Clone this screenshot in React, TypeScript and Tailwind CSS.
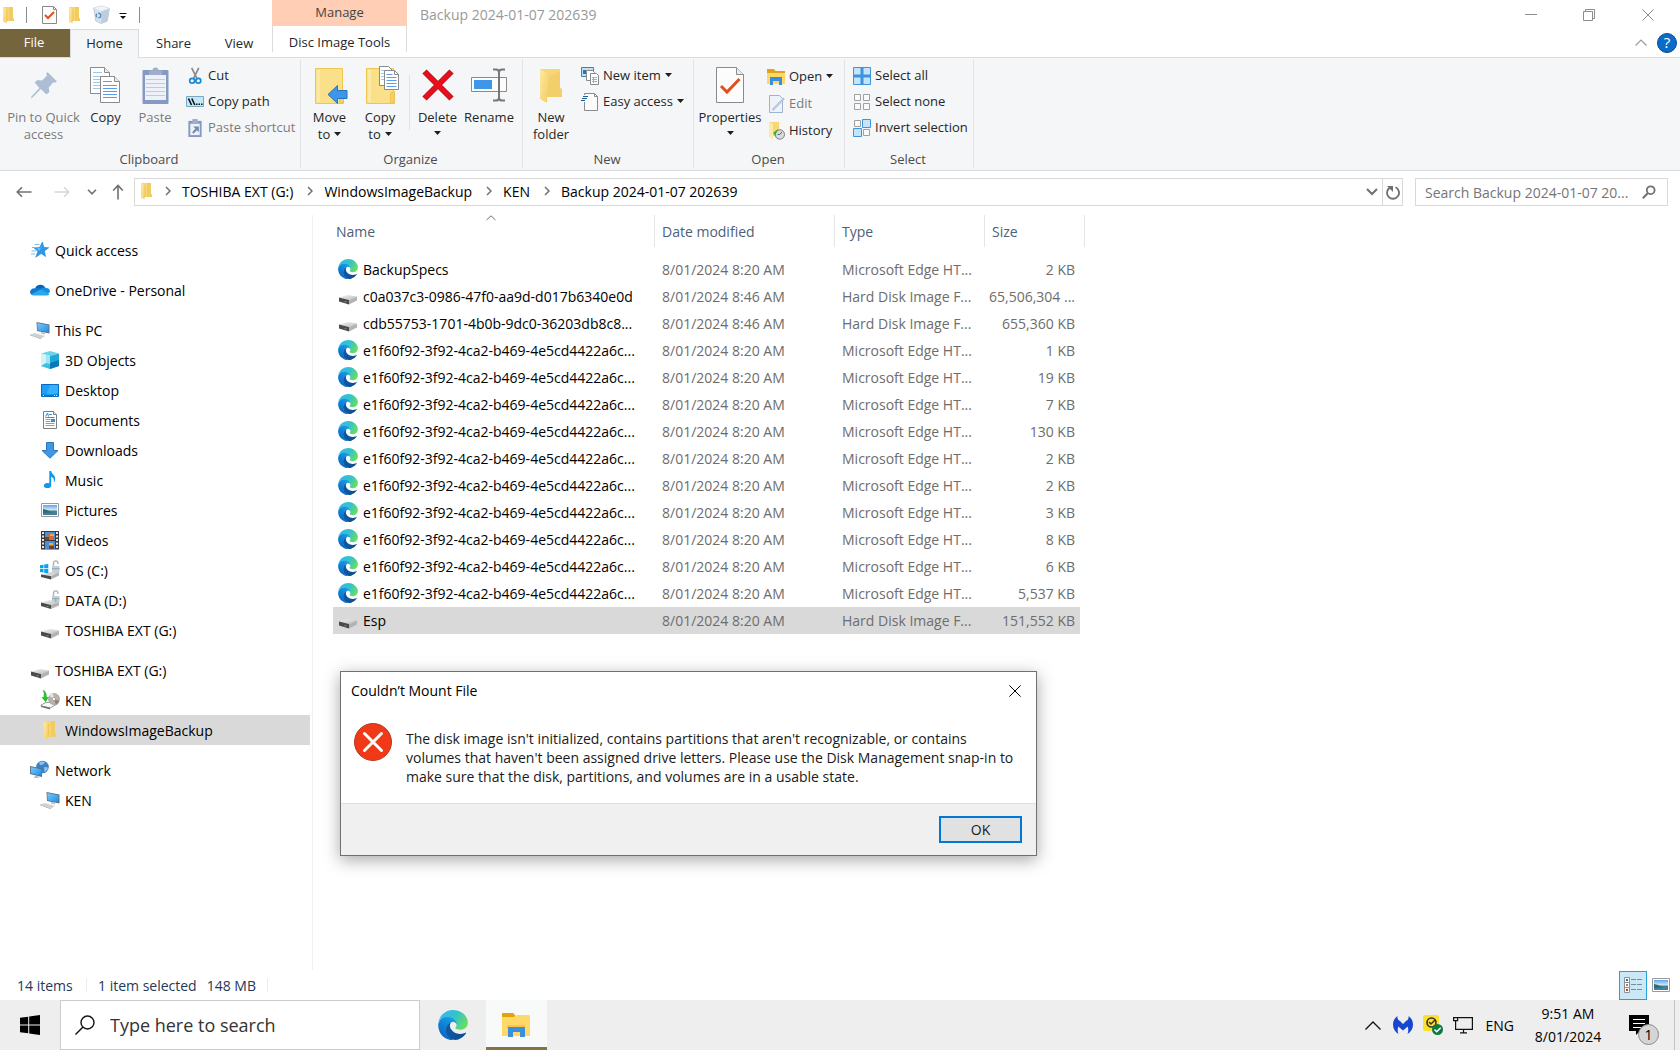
import React from "react";

type IconProps = { className?: string };

/* ---------- shared gradients ---------- */

function Gradients() {
  return (
    <svg width="0" height="0" className="absolute" aria-hidden="true">
      <defs>
        <linearGradient id="edgeA" x1="0.1" y1="0.5" x2="1" y2="0.5">
          <stop offset="0" stopColor="#0c59a4" />
          <stop offset="1" stopColor="#114a8b" />
        </linearGradient>
        <linearGradient id="edgeB" x1="0.8" y1="0.1" x2="0.3" y2="1">
          <stop offset="0" stopColor="#1b9de2" />
          <stop offset="0.5" stopColor="#0f80d7" />
          <stop offset="1" stopColor="#0b62bd" />
        </linearGradient>
        <linearGradient id="edgeC" x1="0" y1="0.3" x2="1" y2="0.7">
          <stop offset="0" stopColor="#35b8f1" />
          <stop offset="0.5" stopColor="#33c3c9" />
          <stop offset="1" stopColor="#6ce05a" />
        </linearGradient>
        <linearGradient id="folderA" x1="0" y1="0" x2="1" y2="1">
          <stop offset="0" stopColor="#fde9a6" />
          <stop offset="1" stopColor="#f6cf66" />
        </linearGradient>
        <linearGradient id="driveA" x1="0" y1="0" x2="1" y2="1">
          <stop offset="0" stopColor="#f2f2f2" />
          <stop offset="1" stopColor="#bdbdbd" />
        </linearGradient>
        <linearGradient id="screenA" x1="0" y1="0" x2="1" y2="1">
          <stop offset="0" stopColor="#7cc8f7" />
          <stop offset="1" stopColor="#1d8fe6" />
        </linearGradient>
        <linearGradient id="skyA" x1="0" y1="0" x2="0" y2="1">
          <stop offset="0" stopColor="#5aa5ee" />
          <stop offset="0.5" stopColor="#d6eafa" />
          <stop offset="0.6" stopColor="#4c7f86" />
          <stop offset="1" stopColor="#3f7fae" />
        </linearGradient>
      </defs>
    </svg>
  );
}

/* ---------- icons ---------- */

const Edge = ({ className }: IconProps) => (
  <svg viewBox="0 0 256 259" className={className}>
    <path fill="url(#edgeA)" d="M235.68 195.46a93.73 93.73 0 0 1-10.54 4.71 101.87 101.87 0 0 1-35.9 6.46c-47.32 0-88.54-32.55-88.54-74.32A31.48 31.48 0 0 1 117.13 105c-42.8 1.8-53.8 46.4-53.8 72.53 0 73.88 68.09 81.37 82.76 81.37 7.91 0 19.84-2.3 27-4.56l1.31-.44a128.34 128.34 0 0 0 66.6-52.8 4 4 0 0 0-5.32-5.64z" />
    <path fill="url(#edgeB)" d="M105.73 246.42A79.2 79.2 0 0 1 83 225.08a80.72 80.72 0 0 1 29.49-120c3.12-1.47 8.45-4.13 15.54-4a32.35 32.35 0 0 1 25.69 13 31.88 31.88 0 0 1 6.36 18.66c0-.21 24.46-79.6-80-79.6-43.9 0-80 41.66-80 78.21a130.15 130.15 0 0 0 12.11 56 128 128 0 0 0 156.38 67.11 75.55 75.55 0 0 1-62.78-8z" />
    <path fill="url(#edgeC)" d="M152.33 148.86c-.81 1-3.3 2.5-3.3 5.66 0 2.61 1.7 5.12 4.72 7.23 14.38 10 41.49 8.68 41.56 8.68a59.56 59.56 0 0 0 30.27-8.35 61.38 61.38 0 0 0 30.43-52.88c.26-22.41-8-37.31-11.34-43.91C223.46 23.84 177.72 0 128 0A128 128 0 0 0 0 126.2c.48-36.54 36.8-66.05 80-66.05 3.5 0 23.46.34 42 10.07 16.34 8.58 24.9 18.94 30.85 29.21 6.18 10.67 7.28 24.15 7.28 29.52s-2.74 13.33-7.8 19.91z" />
  </svg>
);

const Folder = ({ className }: IconProps) => (
  <svg viewBox="0 0 13 18" className={className}>
    <path fill="#f8d675" d="M1 1h10v11l1 1v2H1z" />
    <path fill="#f3cb63" d="M7 1h4v11l1 1v2H7z" />
    <path fill="url(#folderA)" d="M1 1l3.5 2v14.5L1 15.5z" />
    <path fill="#f0c358" d="M4.500 3v13l1-.8V3.600z" />
  </svg>
);

const Drive = ({ className }: IconProps) => (
  <svg viewBox="0 0 20 20" className={className}>
    <path fill="url(#driveA)" d="M1 11.500L10 9l9 1.500-8 3.500z" />
    <path fill="#4a4a4a" d="M1 11.500l10 2.500v4.500L1 15.500z" />
    <path fill="#b3b3b3" d="M11 14l8-3.500v4l-8 4z" />
    <path fill="#5ab35a" d="M6.500 15.300h2v1h-2z" />
  </svg>
);

const LockedDrive = ({ className }: IconProps) => (
  <svg viewBox="0 0 20 20" className={className}>
    <path fill="url(#driveA)" d="M1 12.500L10 10l9 1.500-8 3.500z" />
    <path fill="#4a4a4a" d="M1 12.500l10 2.500v4L1 16z" />
    <path fill="#b3b3b3" d="M11 15l8-3.500v4L11 19z" />
    <path fill="#5ab35a" d="M6.500 16h2v1h-2z" />
    <path fill="none" stroke="#b5b5b5" strokeWidth="1.500" d="M13.500 6V3.200a2.200 2.200 0 0 1 4.400 0V4" />
    <path fill="#c9ced2" d="M12 6h7.500v6l-3.700 1.500L12 12z" />
    <path fill="#8fb0c9" d="M12 8h7.500v1.200H12z" />
    <path fill="#9aa0a5" d="M15.300 9h1v3h-1z" />
  </svg>
);

const OsDrive = ({ className }: IconProps) => (
  <svg viewBox="0 0 20 20" className={className}>
    <path fill="url(#driveA)" d="M1 14.500L10 12l9-.5-8 4z" />
    <path fill="#4a4a4a" d="M1 14.500l10 1.500v3.500L1 17z" />
    <path fill="#b3b3b3" d="M11 16l8-4.500v4l-8 4z" />
    <path fill="none" stroke="#b5b5b5" strokeWidth="1.500" d="M13.500 6V3.200a2.200 2.200 0 0 1 4.400 0V4" />
    <path fill="#c9ced2" d="M12 6h7.500v6l-3.700 1.500L12 12z" />
    <path fill="#8fb0c9" d="M12 8h7.500v1.200H12z" />
    <path fill="#00a4ef" d="M0 5.200l3.500-.5v3.600H0zM4.200 4.600L8.300 4v4.300H4.200zM0 9h3.500v3.600L0 12.100zM4.200 9h4.100v4.200l-4.100-.5z" />
  </svg>
);

const BackupDisc = ({ className }: IconProps) => (
  <svg viewBox="0 0 20 20" className={className}>
    <path fill="#fafafa" stroke="#9b9b9b" d="M1 15l5-2.500 12-.5v1.500l-8 4.500-9-2z" />
    <path fill="#777" d="M1 15.500l9 2v2l-9-2.500z" />
    <circle cx="14" cy="9" r="5.500" fill="#b9b3ab" stroke="#8d8d8d" strokeWidth="0.600" />
    <path fill="#e8e4de" d="M14 9L9.500 6A5.500 5.500 0 0 1 13 3.600z" />
    <path fill="#8f7f76" d="M14 9l5.200 2a5.500 5.500 0 0 1-3.500 3.200z" />
    <circle cx="14" cy="9" r="1.600" fill="#fff" stroke="#888" strokeWidth="0.600" />
    <path fill="#2fbe2f" d="M2.500 0c3 .5 4.200 3 4.200 7l2 .2-3 5-4.200-5 2-.1C4 4.500 4 2 2.500 0z" />
  </svg>
);

const Computer = ({ className }: IconProps) => (
  <svg viewBox="0 0 20 20" className={className}>
    <path fill="#5d7286" d="M6.500 2l13 2.500v9L7 11z" />
    <path fill="url(#screenA)" d="M7.300 3l11.200 2.200v7L7.700 10.200z" />
    <path fill="#b8bcc0" d="M11 12l4 .8v1.700l-4-1z" />
    <path fill="#cfd2d5" d="M0 14.500l5-1.500 10 3-4 2.500z" />
    <path fill="#a7abaf" d="M0 14.500l11 4v.7L0 15.200z" />
  </svg>
);

const Network = ({ className }: IconProps) => (
  <svg viewBox="0 0 20 20" className={className}>
    <circle cx="12.500" cy="7" r="6.300" fill="#3d83c4" />
    <path fill="#8fc2e8" d="M9 2.500c2-1.300 5-1.300 6 0l-2 2-3 .5zM14 7l4 .5c-.5 2.500-2 4-3.500 4.500z" />
    <path fill="#4d6f8d" d="M0 6l12 2.500V17L0 14z" />
    <path fill="url(#screenA)" d="M.8 7l10.500 2.200v6.600L.8 13.200z" />
    <path fill="#b9bec3" d="M5 15.500l3 .7 1.500 1.800H4z" />
  </svg>
);

const QuickStar = ({ className }: IconProps) => (
  <svg viewBox="0 0 20 20" className={className}>
    <path fill="#2c98e8" stroke="#1278c9" strokeWidth="0.500" d="M12.500 2l1.300 5.300 5 .4-4.300 3.200 1 5.600-4.300-2.900-5.500 3.600 2.200-5.800L4 7.800l5.500-.4z" />
    <path fill="#6cc0f7" d="M12.300 4l-2 4-3.800.4 3 2.500z" />
    <path stroke="#7bbdec" strokeWidth="1" d="M4.500 4.500h5M2 7.500h4M1.500 11H6M1 14h4" />
  </svg>
);

const OneDrive = ({ className }: IconProps) => (
  <svg viewBox="0 0 20 20" className={className}>
    <path fill="#0364b8" d="M5 9a5.500 5.500 0 0 1 10.300-1.200L11 12z" />
    <path fill="#0f78d4" d="M0 12.500a4 4 0 0 1 5-4c1.500-1 4-.8 5 .3l5 6.200H3.500A3.400 3.400 0 0 1 0 12.500z" />
    <path fill="#1490df" d="M10 9.500c1.500-2 4-2.300 6-1.500a4 4 0 0 1 4 4l-4 3z" />
    <path fill="#28a8ea" d="M1 14.500l9.500-5L19.500 14a3 3 0 0 1-2.800 1.500h-13A4 4 0 0 1 1 14.500z" />
  </svg>
);

const Objects3D = ({ className }: IconProps) => (
  <svg viewBox="0 0 20 20" className={className}>
    <path fill="#6fd3e8" d="M1 3.500L10 1l9 2.500L10 6z" />
    <path fill="#a6e3f0" d="M1 3.500L10 6v13l-9-3z" />
    <path fill="#1fa9d8" d="M19 3.500L10 6v13l9-3z" />
    <path fill="#0a7ab5" d="M10 19v-6l9-3v6z" />
    <path fill="#d3f3f9" d="M1 3.500L6 5v12.600L1 16z" />
    <path fill="#3cc0dc" d="M1 16l5-3 4 1v5z" />
  </svg>
);

const Desktop = ({ className }: IconProps) => (
  <svg viewBox="0 0 20 20" className={className}>
    <path fill="#1aa0f5" stroke="#0a6cc0" d="M1.500 4.500h17v12h-17z" />
    <path fill="#38b1fb" d="M10 5h8v8l-12 3z" />
    <path fill="#0a78cf" d="M2 14.500h16V16H2z" />
    <path stroke="#fff" strokeDasharray="1 1" d="M3 15.500h1M14 15.500h4" />
  </svg>
);

const Documents = ({ className }: IconProps) => (
  <svg viewBox="0 0 20 20" className={className}>
    <path fill="#fff" stroke="#7d7d7d" d="M3.500 1.500h10l3 3v14h-13z" />
    <path fill="#eee" stroke="#7d7d7d" d="M13.500 1.500v3h3" />
    <path stroke="#2b8fdc" d="M9 4.500h3M5.500 7.500h9" />
    <path fill="none" stroke="#2b8fdc" d="M5.500 6.500l2-3.500 1 3.500" />
    <path stroke="#9a9a9a" d="M5.500 9.500h5M5.500 11.500h5M5.500 13.500h9M5.500 15.500h9" />
    <path fill="#2b8fdc" d="M11 9h4v3h-4z" />
  </svg>
);

const Downloads = ({ className }: IconProps) => (
  <svg viewBox="0 0 20 20" className={className}>
    <path fill="#3f97e8" stroke="#2f74bb" d="M6.500 2.500h7v8H18L10 18.200 2 10.500h4.500z" />
  </svg>
);

const Music = ({ className }: IconProps) => (
  <svg viewBox="0 0 20 20" className={className}>
    <ellipse cx="7.500" cy="15.500" rx="3.600" ry="2.600" fill="#1196f0" />
    <path fill="#1196f0" d="M9.300 1h1.900c.3 3 4.300 4 4 8-.1 1.700-.8 2.800-1.500 3.500.8-2.900-.3-5-2.500-5.700v9H9.300z" />
  </svg>
);

const Pictures = ({ className }: IconProps) => (
  <svg viewBox="0 0 20 20" className={className}>
    <path fill="#fff" stroke="#9b9b9b" d="M1.500 3.500h17v13h-17z" />
    <path fill="url(#skyA)" d="M3 5h14v10H3z" />
    <path fill="#356a6c" d="M3 9l4 1 5 2.500-9 .5z" />
  </svg>
);

const Videos = ({ className }: IconProps) => (
  <svg viewBox="0 0 20 20" className={className}>
    <path fill="#3a3a3a" d="M1 1h18v18.500H1z" />
    <path fill="#4b8fd6" d="M5 2h10v8H5zM5 11h10v8H5z" />
    <path fill="#e2642c" d="M8 4h4l2 5H9z" />
    <path fill="#e9b33a" d="M10 4h4v2h-4zM9 13h4v2H9z" />
    <path fill="#7c3c28" d="M5 7h4v3H5zM9 16h5v3H9z" />
    <path stroke="#e6e6e6" strokeWidth="2" strokeDasharray="2 1.500" d="M3 2v17M17 2v17" />
  </svg>
);

const CheckDoc = ({ className }: IconProps) => (
  <svg viewBox="0 0 28 36" className={className}>
    <path fill="#fcfcfc" stroke="#8a8a8a" d="M.5.5h20l7 7v28H.5z" />
    <path fill="#ececec" stroke="#8a8a8a" d="M20.500.5v7h7" />
    <path fill="none" stroke="#e2501a" strokeWidth="3" d="M5 19l6 6L23.500 12" />
  </svg>
);

const CheckDocSmall = ({ className }: IconProps) => (
  <svg viewBox="0 0 15 18" className={className}>
    <path fill="#fcfcfc" stroke="#8a8a8a" d="M.5.5h11l3 3v14H.5z" />
    <path fill="none" stroke="#8a8a8a" d="M11.500.5v3h3" />
    <path fill="none" stroke="#e2501a" strokeWidth="2" d="M3 9l3 3 6-6" />
  </svg>
);

const RecycleBin = ({ className }: IconProps) => (
  <svg viewBox="0 0 17 19" className={className}>
    <path fill="#d7e3ee" stroke="#a9bccd" strokeWidth="0.700" d="M.8 3l8-2 7.500 2.500-2 12.500-6 2.500-5.500-2.500z" />
    <path fill="#bccddd" d="M8.500 6l7.800-2.500-2 12.500-6 2.500z" />
    <path fill="#eef4f9" d="M.8 3l8-2 7.500 2.500L8.500 6z" />
    <circle cx="5.500" cy="10.500" r="2.300" fill="none" stroke="#5d8ec0" strokeWidth="1.400" strokeDasharray="3.500 1.200" />
  </svg>
);

const Pin = ({ className }: IconProps) => (
  <svg viewBox="0 0 28 28" className={className}>
    <path fill="#acbdd4" d="M17.500 1L27 10.500l-2.300 1.300-1.400-.5-4.600 5.200.7 4.500-3 2.500-5.600-5.600L2.500 26.500l-1.700.7.600-1.800L9.500 17 4.600 11.500 7.500 9l4.600.4 4.900-4.800-.8-1.800z" />
  </svg>
);

const page = (x: number, y: number, faded: boolean) => (
  <g transform={`translate(${x} ${y})`}>
    <path fill="#fff" stroke="#8a8a8a" d="M.5.5h14l5 5v21H.5z" />
    <path fill="#eee" stroke="#8a8a8a" d="M14.500.5v5h5" />
    <path stroke={faded ? "#9cc9e8" : "#5a9bec"} d="M3 5.500h9M3 9.500h14M3 12.500h14M3 15.500h14M3 18.500h14M3 21.500h14" />
  </g>
);

const CopyPages = ({ className }: IconProps) => (
  <svg viewBox="0 0 31 36" className={className}>
    {page(0, 0, true)}
    {page(10, 9, false)}
  </svg>
);

const Paste = ({ className }: IconProps) => (
  <svg viewBox="0 0 27 37" className={className}>
    <path fill="#8599c2" d="M1.500 3h24a1 1 0 0 1 1 1v32a1 1 0 0 1-1 1h-24a1 1 0 0 1-1-1V4a1 1 0 0 1 1-1z" />
    <path fill="#eef2f8" d="M3 8h21v25H3z" />
    <path fill="#9eaecb" d="M7 3.500h3.500a3 3 0 0 1 6 0H20V8H7z" />
    <path stroke="#bccbe0" d="M4 12.500h19M4 16.500h19M4 20.500h19M4 24.500h19M4 28.500h19" />
  </svg>
);

const Cut = ({ className }: IconProps) => (
  <svg viewBox="0 0 18 19" className={className}>
    <path fill="none" stroke="#8a8a8a" strokeWidth="1.800" d="M5.500 1l5.500 11M13 1L7.500 12" />
    <circle cx="6" cy="14.500" r="2.600" fill="none" stroke="#1d87d2" strokeWidth="1.800" />
    <circle cx="12.500" cy="14.500" r="2.600" fill="none" stroke="#1d87d2" strokeWidth="1.800" />
  </svg>
);

const CopyPath = ({ className }: IconProps) => (
  <svg viewBox="0 0 18 18" className={className}>
    <path fill="#c5e6f8" stroke="#79a8c4" d="M.5 3.500h17v10H.5z" />
    <path stroke="#111" strokeWidth="1.600" d="M2.500 5.500l3 6.500M5.800 5.500l3 6.500" />
    <path fill="#111" d="M10 10.500h1.500V12H10zM12.500 10.500h1.500V12h-1.500zM15 10.500h1.500V12H15z" />
  </svg>
);

const PasteShortcut = ({ className }: IconProps) => (
  <svg viewBox="0 0 18 19" className={className}>
    <path fill="#8599c2" d="M2 2h14v17H2z" />
    <path fill="#eef2f8" d="M4 5h10v12H4z" />
    <path fill="#9eaecb" d="M6 2a3 3 0 0 1 6 0v2.500H6z" />
    <path fill="#6f87b4" d="M7 8h6v6l-2-2-3.500 3.500L6 14l3.500-4z" />
  </svg>
);

const BigFolderBack = () => (
  <g>
    <path fill="#fbe08a" stroke="#eec64e" d="M.5 2.500h27v23h1v12H.5z" />
    <path fill="#fde9a6" d="M2 4h3v32H2z" />
    <path fill="#f5d061" stroke="#e9bf47" strokeWidth="0.700" d="M24.500 37v-9a2 2 0 0 1 4 0v9z" />
  </g>
);

const MoveTo = ({ className }: IconProps) => (
  <svg viewBox="0 0 33 39" className={className}>
    <BigFolderBack />
    <path fill="#3d96e8" stroke="#2773bd" d="M13 28.500L22.500 19.500v5H32v8h-9.500v5z" />
  </svg>
);

const CopyTo = ({ className }: IconProps) => (
  <svg viewBox="0 0 33 39" className={className}>
    <BigFolderBack />
    <path fill="#fff" stroke="#8a8a8a" d="M13.500.5h9l4 4v15h-13z" />
    <path stroke="#9cc9e8" d="M15 4.500h6M15 7.500h6M15 10.500h6M15 13.500h6" />
    <path fill="#fff" stroke="#8a8a8a" d="M18.500 4.500h10l4 4v15h-14z" />
    <path fill="none" stroke="#8a8a8a" d="M28.500 4.500v4h4" />
    <path stroke="#5a9bec" d="M20.500 8.500h6M20.500 11.500h10M20.500 14.500h10M20.500 17.500h10M20.500 20.500h10" />
  </svg>
);

const DeleteX = ({ className }: IconProps) => (
  <svg viewBox="0 0 32 32" className={className}>
    <path stroke="#b5101c" strokeWidth="6" d="M2.500 2.500l27 27M29.500 2.500l-27 27" />
    <path stroke="#e80f1b" strokeWidth="4.500" d="M3 3l26 26M29 3L3 29" />
  </svg>
);

const Rename = ({ className }: IconProps) => (
  <svg viewBox="0 0 36 34" className={className}>
    <path fill="#fbfbfb" stroke="#8a8a8a" d="M.5 9.500h35v14H.5z" />
    <path fill="#3d96e8" d="M3 12h18v9H3z" />
    <path fill="none" stroke="#777" strokeWidth="2" d="M22 1.500h3a3 3 0 0 1 3 2.500 3 3 0 0 1 3-2.500h3M28 4v26M22 32.500h3a3 3 0 0 0 3-2.500 3 3 0 0 0 3 2.500h3" />
  </svg>
);

const NewFolder = ({ className }: IconProps) => (
  <svg viewBox="0 0 25 36" className={className}>
    <path fill="#f6d678" d="M1 2h20v19l2 1v8H1z" />
    <path fill="#efc860" d="M10 10l11-6v17l2 1v8H8z" opacity="0.500" />
    <path fill="url(#folderA)" d="M1 2l7 4v30l-7-4z" />
  </svg>
);

const NewItem = ({ className }: IconProps) => (
  <svg viewBox="0 0 18 18" className={className}>
    <path fill="#bfe0f5" stroke="#3f83b5" d="M.5.5h12v9H.5z" />
    <path fill="#2f74aa" d="M2 3h3v4H2z" />
    <path fill="#fff" stroke="#8a8a8a" d="M5.500 3.500h6l2 2v8h-8z" />
    <path fill="#fff" stroke="#8a8a8a" d="M9.500 6.500h6l2 2v9h-8z" />
    <path stroke="#8fb5dc" d="M11 10.500h5M11 12.500h5M11 14.500h5" />
    <path stroke="#e39a7b" d="M12.500 10v6" />
  </svg>
);

const EasyAccess = ({ className }: IconProps) => (
  <svg viewBox="0 0 18 18" className={className}>
    <path fill="#fcfcfc" stroke="#8a8a8a" d="M3.500.5h10l3 3v14h-13z" />
    <path fill="none" stroke="#8a8a8a" d="M13.500.5v3h3" />
    <path fill="#f4f5f7" d="M0 2h5v7H0z" />
    <path stroke="#1f5f94" strokeWidth="1.200" d="M2 3.500h5M1 5.500h5M0 7.500h4" />
  </svg>
);

const OpenFolder = ({ className }: IconProps) => (
  <svg viewBox="0 0 18 18" className={className}>
    <path fill="#e3a21a" d="M0 1h7l1.500 2H18v3H0z" />
    <path fill="#ffd966" d="M0 5h18v11H0z" />
    <path fill="#3d8fdd" d="M3 9h12v8h-3v-4H6v4H3z" />
  </svg>
);

const Edit = ({ className }: IconProps) => (
  <svg viewBox="0 0 18 18" className={className}>
    <path fill="#eef3fa" stroke="#9fb2d0" d="M2.500.5h10l3 3v14h-13z" />
    <path stroke="#9fb2d0" strokeWidth="2" d="M5.500 15L17 3.500" />
    <path stroke="#dfe8f3" strokeWidth="0.800" d="M6 14.500L16.500 4" />
  </svg>
);

const History = ({ className }: IconProps) => (
  <svg viewBox="0 0 18 18" className={className}>
    <path fill="#f8d675" d="M2 0h10v14H2z" />
    <path fill="#fde9a6" d="M2 0l4 2v15l-4-2z" />
    <circle cx="12.800" cy="12.500" r="4.700" fill="#d9dcde" stroke="#7c7c7c" />
    <path fill="none" stroke="#555" strokeWidth="0.900" d="M12.800 12.500l2-2.500M12.800 12.500h-2.200" />
    <path fill="#31b331" d="M11 7l-1 3.200c-1.500.6-1.500 3 0 5L6 11z" />
  </svg>
);

const SelectAll = ({ className }: IconProps) => (
  <svg viewBox="0 0 18 18" className={className}>
    <path fill="#c7e3f8" stroke="#3b94dd" d="M.5.5h7.500v7.500H.5zM10 .5h7.500v7.500H10zM.5 10h7.500v7.500H.5zM10 10h7.500v7.500H10z" />
    <path stroke="#3b94dd" strokeWidth="2" d="M9 0v18M0 9h18" />
  </svg>
);

const SelectNone = ({ className }: IconProps) => (
  <svg viewBox="0 0 18 18" className={className}>
    <path fill="#fafafa" stroke="#a0a0a0" d="M1.500 1.500h6v6h-6zM10.500 1.500h6v6h-6zM1.500 10.500h6v6h-6zM10.500 10.500h6v6h-6z" />
  </svg>
);

const InvertSelection = ({ className }: IconProps) => (
  <svg viewBox="0 0 18 18" className={className}>
    <path fill="#fafafa" stroke="#a0a0a0" d="M1.500 1.500h6v6h-6zM10.500 10.500h6v6h-6z" />
    <path fill="#c7e3f8" stroke="#3b94dd" d="M9.500.5h8v8h-8zM.5 9.500h8v8h-8z" />
  </svg>
);

const Caret = ({ className }: IconProps) => (
  <svg viewBox="0 0 7 4" className={`h-[4px] w-[7px] shrink-0 ${className ?? ""}`}>
    <path fill="#1e1e1e" d="M0 0h7L3.500 4z" />
  </svg>
);

const Close = ({ className }: IconProps) => (
  <svg viewBox="0 0 12 12" className={className}>
    <path fill="none" stroke="currentColor" d="M.4.4l11.200 11.200M11.600.4L.4 11.600" />
  </svg>
);

const Chevron = ({ className }: IconProps) => (
  <svg viewBox="0 0 6 10" className={className}>
    <path fill="none" stroke="#707070" strokeWidth="1.500" d="M1 1l4 4-4 4" />
  </svg>
);

const Magnifier = ({ className }: IconProps) => (
  <svg viewBox="0 0 14 14" className={className}>
    <circle cx="8.700" cy="5.200" r="3.900" fill="none" stroke="#707070" strokeWidth="1.800" />
    <path stroke="#707070" strokeWidth="2" d="M6 8L.8 13.200" />
  </svg>
);

/* ---------- ribbon ---------- */

type BigProps = {
  icon: React.ReactNode;
  lines: string[];
  width: string;
  caret?: boolean;
  disabled?: boolean;
};

function BigButton({ icon, lines, width, caret, disabled }: BigProps) {
  return (
    <button
      type="button"
      disabled={disabled}
      className={`flex shrink-0 flex-col items-center pt-2 leading-[17px] whitespace-nowrap ${width} ${disabled ? "text-[#7b7b7b]" : "text-[#262626]"}`}
    >
      <span className="mb-[5px] flex h-[38px] items-center">{icon}</span>
      {lines.map((line, i) => (
        <span key={line} className="flex items-center gap-1">
          {line}
          {caret && i > 0 && <Caret className="mb-[2px]" />}
        </span>
      ))}
      {caret && lines.length === 1 && <Caret className="mt-[5px]" />}
    </button>
  );
}

type SmallProps = {
  icon: React.ReactNode;
  label: string;
  caret?: boolean;
  disabled?: boolean;
  tall?: boolean;
};

function SmallButton({ icon, label, caret, disabled, tall }: SmallProps) {
  return (
    <button
      type="button"
      disabled={disabled}
      className={`flex items-center gap-1 whitespace-nowrap ${tall ? "h-[27px]" : "h-[26px]"} ${disabled ? "text-[#7b7b7b]" : "text-[#262626]"}`}
    >
      {icon}
      <span>{label}</span>
      {caret && <Caret className="mb-[2px]" />}
    </button>
  );
}

function Group({ label, width, inset, children }: { label: string; width: string; inset?: boolean; children: React.ReactNode }) {
  return (
    <section className={`my-[2px] flex shrink-0 flex-col border-r border-[#e1e2e3] ${width}`} aria-label={label}>
      <div className={`-mt-[2px] flex h-[93px] items-start ${inset ? "pl-[3px]" : ""}`}>{children}</div>
      <div className="pr-[2px] text-center leading-[18px] text-[#4b4b4b]">{label}</div>
    </section>
  );
}

const small = "h-[18px] w-[18px] shrink-0";

function Ribbon() {
  return (
    <div className="flex h-[114px] border-y border-[#dadbdc] bg-[#f5f6f7] text-[13px]">
      <Group label="Clipboard" width="w-[301px]">
        <BigButton width="w-[87px]" disabled icon={<Pin className="h-[28px] w-[28px]" />} lines={["Pin to Quick", "access"]} />
        <BigButton width="w-[37px]" icon={<CopyPages className="h-[36px] w-[31px]" />} lines={["Copy"]} />
        <BigButton width="w-[62px]" disabled icon={<Paste className="h-[37px] w-[27px]" />} lines={["Paste"]} />
        <div className="flex flex-col items-start pt-[5px]">
          <SmallButton icon={<Cut className={small} />} label="Cut" />
          <SmallButton icon={<CopyPath className={small} />} label="Copy path" />
          <SmallButton disabled icon={<PasteShortcut className={small} />} label="Paste shortcut" />
        </div>
      </Group>
      <Group label="Organize" width="w-[222px]" inset>
        <BigButton width="w-[51px]" caret icon={<MoveTo className="ml-1 h-[39px] w-[33px]" />} lines={["Move", "to"]} />
        <BigButton width="w-[50px]" caret icon={<CopyTo className="ml-1 h-[39px] w-[33px]" />} lines={["Copy", "to"]} />
        <div className="mt-[17px] ml-[4px] h-[55px] w-px shrink-0 bg-[#e1e2e3]" />
        <BigButton width="w-[55px]" caret icon={<DeleteX className="h-[32px] w-[32px]" />} lines={["Delete"]} />
        <BigButton width="w-[48px]" icon={<Rename className="h-[34px] w-[36px]" />} lines={["Rename"]} />
      </Group>
      <Group label="New" width="w-[171px]" inset>
        <BigButton width="w-[50px]" icon={<NewFolder className="h-[36px] w-[25px]" />} lines={["New", "folder"]} />
        <div className="flex flex-col items-start pt-[5px] pl-[5px]">
          <SmallButton caret icon={<NewItem className={small} />} label="New item" />
          <SmallButton caret icon={<EasyAccess className={small} />} label="Easy access" />
        </div>
      </Group>
      <Group label="Open" width="w-[151px]" inset>
        <BigButton width="w-[66px]" caret icon={<CheckDoc className="h-[36px] w-[28px]" />} lines={["Properties"]} />
        <div className="flex flex-col items-start pt-[5px] pl-[4px]">
          <SmallButton tall caret icon={<OpenFolder className={small} />} label="Open" />
          <SmallButton tall disabled icon={<Edit className={small} />} label="Edit" />
          <SmallButton tall icon={<History className={small} />} label="History" />
        </div>
      </Group>
      <Group label="Select" width="w-[129px]">
        <div className="flex flex-col items-start pt-[5px] pl-[8px]">
          <SmallButton icon={<SelectAll className={small} />} label="Select all" />
          <SmallButton icon={<SelectNone className={small} />} label="Select none" />
          <SmallButton icon={<InvertSelection className={small} />} label="Invert selection" />
        </div>
      </Group>
    </div>
  );
}

/* ---------- title bar and tabs ---------- */

function TopBar() {
  const tab = "flex items-center justify-center";
  return (
    <header className="relative z-10 -mb-px flex h-[58px] text-[13px] text-[#262626]">
      <div className="flex w-[272px] shrink-0 flex-col">
        <div className="flex h-[29px] items-center">
          <Folder className="ml-[2px] h-[18px] w-[13px]" />
          <div className="mr-[15px] ml-[11px] h-[16px] w-px bg-[#8c8c8c]" />
          <button type="button" aria-label="Properties"><CheckDocSmall className="h-[18px] w-[15px]" /></button>
          <button type="button" aria-label="New folder" className="ml-[11px]"><Folder className="h-[18px] w-[13px]" /></button>
          <button type="button" aria-label="Delete" className="ml-[12px]"><RecycleBin className="h-[19px] w-[17px]" /></button>
          <button type="button" aria-label="Customize Quick Access Toolbar" className="mt-[2px] ml-[9px]">
            <svg viewBox="0 0 8 6" className="h-[6px] w-[8px]"><path fill="#111" d="M.5 0h7v1h-7zM1 3h6L4 6z" /></svg>
          </button>
          <div className="ml-[12px] h-[16px] w-px bg-[#8c8c8c]" />
        </div>
        <nav className="flex flex-1" aria-label="Ribbon tabs">
          <button type="button" className={`${tab} mb-px w-[70px] bg-[#74653d] pr-[2px] text-white`}>File</button>
          <button type="button" className={`${tab} w-[69px] border border-b-0 border-[#dadbdc] bg-[#f5f6f7]`}>Home</button>
          <button type="button" className={`${tab} w-[69px]`}>Share</button>
          <button type="button" className={`${tab} w-[62px]`}>View</button>
        </nav>
      </div>
      <div className="flex w-[135px] shrink-0 flex-col">
        <div className="flex h-[29px] items-center justify-center bg-[#ffceb4] text-[#444]">Manage</div>
        <button type="button" className={`${tab} mb-[6px] flex-1 border-x border-[#dadbdc] pt-[7px] whitespace-nowrap`}>Disc Image Tools</button>
      </div>
      <div className="flex flex-1 flex-col">
        <div className="flex h-[29px] items-center pl-[13px]">
          <h1 className="flex-1 text-[14px] text-[#999]">Backup 2024-01-07 202639</h1>
          <button type="button" aria-label="Minimize" className="mr-[46px]">
            <div className="h-px w-[12px] bg-[#8c8c8c]" />
          </button>
          <button type="button" aria-label="Restore" className="mr-[47px]">
            <svg viewBox="0 0 12 12" className="h-[12px] w-[12px]">
              <path fill="none" stroke="#8c8c8c" d="M.5 2.500h9v9h-9zM2.500 2.500v-2h9v9h-2" />
            </svg>
          </button>
          <button type="button" aria-label="Close" className="mr-[26px] text-[#8c8c8c]"><Close className="h-[12px] w-[12px]" /></button>
        </div>
        <div className="flex flex-1 items-center justify-end gap-[10px] pr-[3px] pb-[2px]">
          <button type="button" aria-label="Minimize the Ribbon">
            <svg viewBox="0 0 12 7" className="h-[7px] w-[12px]"><path fill="none" stroke="#9a9a9a" strokeWidth="1.200" d="M.5 6.500L6 1l5.500 5.500" /></svg>
          </button>
          <button type="button" aria-label="Help" className="flex h-[20px] w-[20px] items-center justify-center rounded-full border border-[#0a4b8c] bg-[#0a6cc8] text-[15px] leading-none font-medium text-white">?</button>
        </div>
      </div>
    </header>
  );
}

/* ---------- address bar ---------- */

const crumbs = ["TOSHIBA EXT (G:)", "WindowsImageBackup", "KEN", "Backup 2024-01-07 202639"];

function AddressBar() {
  return (
    <div className="flex h-[35px] items-end pr-[12px] pl-[16px]">
      <div className="flex h-[28px] w-[118px] shrink-0 items-center">
        <button type="button" aria-label="Back">
          <svg viewBox="0 0 16 12" className="h-[12px] w-[16px]"><path fill="none" stroke="#707070" strokeWidth="1.600" d="M15.500 6H1.500M6 1.200L1.200 6 6 10.800" /></svg>
        </button>
        <button type="button" aria-label="Forward" className="ml-[22px]">
          <svg viewBox="0 0 16 12" className="h-[12px] w-[16px]"><path fill="none" stroke="#d8d8d8" strokeWidth="1.600" d="M.5 6h14M10 1.200L14.800 6 10 10.800" /></svg>
        </button>
        <button type="button" aria-label="Recent locations" className="ml-[17px]">
          <svg viewBox="0 0 10 6" className="h-[6px] w-[10px]"><path fill="none" stroke="#707070" strokeWidth="1.600" d="M1 .8l4 4 4-4" /></svg>
        </button>
        <button type="button" aria-label="Up" className="ml-[15px]">
          <svg viewBox="0 0 12 16" className="h-[16px] w-[12px]"><path fill="none" stroke="#707070" strokeWidth="1.600" d="M6 15.500V1.500M1.200 6.500L6 1.500l4.800 5" /></svg>
        </button>
      </div>
      <div className="flex h-[28px] min-w-0 flex-1 items-center border border-[#d9d9d9] text-[14px] text-black">
        <Folder className="mb-[2px] ml-[5px] h-[18px] w-[13px] shrink-0" />
        <ol className="flex flex-1 items-center pb-[2px] whitespace-nowrap">
          {crumbs.map((c) => (
            <li key={c} className="group flex items-center">
              <Chevron className="mr-[11px] ml-[14px] h-[10px] w-[6px] group-first:ml-[12px]" />
              <a href="#" className="text-black">{c}</a>
            </li>
          ))}
        </ol>
        <button type="button" aria-label="Previous locations" className="mr-[4px]">
          <svg viewBox="0 0 12 8" className="h-[8px] w-[12px]"><path fill="none" stroke="#707070" strokeWidth="2" d="M1 1l5 5 5-5" /></svg>
        </button>
        <button type="button" aria-label="Refresh" className="flex h-full w-[20px] items-center justify-center border-l border-[#d9d9d9]">
          <svg viewBox="0 0 14 15" className="h-[15px] w-[14px]">
            <path fill="none" stroke="#707070" strokeWidth="1.800" d="M9.500 2.300a6 6 0 1 1-5.500.3" />
            <path fill="#707070" d="M1 1h6v6z" />
          </svg>
        </button>
      </div>
      <div className="ml-[12px] flex h-[28px] w-[253px] shrink-0 items-center border border-[#d9d9d9] pr-[11px] pl-[9px]">
        <input
          type="text"
          aria-label="Search this folder"
          placeholder="Search Backup 2024-01-07 20..."
          className="min-w-0 flex-1 bg-transparent text-[14px] outline-none placeholder:text-[#757575]"
        />
        <Magnifier className="h-[14px] w-[14px] shrink-0" />
      </div>
    </div>
  );
}

/* ---------- navigation pane ---------- */

type Node = { label: string; icon: (p: IconProps) => React.ReactElement; root?: boolean; selected?: boolean };

const tree: Node[][] = [
  [{ label: "Quick access", icon: QuickStar, root: true }],
  [{ label: "OneDrive - Personal", icon: OneDrive, root: true }],
  [
    { label: "This PC", icon: Computer, root: true },
    { label: "3D Objects", icon: Objects3D },
    { label: "Desktop", icon: Desktop },
    { label: "Documents", icon: Documents },
    { label: "Downloads", icon: Downloads },
    { label: "Music", icon: Music },
    { label: "Pictures", icon: Pictures },
    { label: "Videos", icon: Videos },
    { label: "OS (C:)", icon: OsDrive },
    { label: "DATA (D:)", icon: LockedDrive },
    { label: "TOSHIBA EXT (G:)", icon: Drive },
  ],
  [
    { label: "TOSHIBA EXT (G:)", icon: Drive, root: true },
    { label: "KEN", icon: BackupDisc },
    { label: "WindowsImageBackup", icon: Folder, selected: true },
  ],
  [
    { label: "Network", icon: Network, root: true },
    { label: "KEN", icon: Computer },
  ],
];

function NavigationPane() {
  return (
    <nav className="mt-[9px] flex w-[313px] shrink-0 flex-col gap-[10px] border-r border-[#f0f0f0] pt-[20px] pr-[2px]" aria-label="Navigation pane">
      {tree.map((group, g) => (
        <ul key={g}>
          {group.map((n) => (
            <li key={n.label}>
              <a
                href="#"
                className={`flex h-[30px] items-center gap-[5px] text-[14px] text-black ${n.root ? "pl-[30px]" : "pl-[40px]"} ${n.selected ? "bg-[#d9d9d9]" : ""}`}
              >
                <n.icon className="h-[20px] w-[20px] shrink-0" />
                {n.label}
              </a>
            </li>
          ))}
        </ul>
      ))}
    </nav>
  );
}

/* ---------- file list ---------- */

type FileRow = { name: string; time: string; html: boolean; size: string; selected?: boolean };

const hash = "e1f60f92-3f92-4ca2-b469-4e5cd4422a6c...";
const files: FileRow[] = [
  { name: "BackupSpecs", time: "8:20 AM", html: true, size: "2 KB" },
  { name: "c0a037c3-0986-47f0-aa9d-d017b6340e0d", time: "8:46 AM", html: false, size: "65,506,304 ..." },
  { name: "cdb55753-1701-4b0b-9dc0-36203db8c8...", time: "8:46 AM", html: false, size: "655,360 KB" },
  ...["1 KB", "19 KB", "7 KB", "130 KB", "2 KB", "2 KB", "3 KB", "8 KB", "6 KB", "5,537 KB"].map((size) => ({
    name: hash,
    time: "8:20 AM",
    html: true,
    size,
  })),
  { name: "Esp", time: "8:20 AM", html: false, size: "151,552 KB", selected: true },
];

function FileList() {
  const head = "flex h-[32px] items-center border-r border-[#e5e5e5]";
  return (
    <table className="mt-[9px] ml-[20px] table-fixed border-collapse text-left text-[14px] whitespace-nowrap text-[#6d6d6d]">
      <colgroup>
        <col className="w-[322px]" />
        <col className="w-[180px]" />
        <col className="w-[150px]" />
        <col className="w-[95px]" />
        <col className="w-[5px]" />
      </colgroup>
      <thead className="text-[#4c607a]">
        <tr className="h-[41px] align-top">
          <th className="relative p-0 font-normal">
            <div className={`${head} pl-[3px]`}>Name</div>
            <svg viewBox="0 0 10 6" className="absolute top-0 left-[153px] h-[6px] w-[10px]">
              <path fill="none" stroke="#6d6d6d" d="M.5 5L5 .8 9.500 5" />
            </svg>
          </th>
          <th className="p-0 font-normal"><div className={`${head} pl-[7px]`}>Date modified</div></th>
          <th className="p-0 font-normal"><div className={`${head} pl-[7px]`}>Type</div></th>
          <th colSpan={2} className="p-0 font-normal"><div className={`${head} pl-[7px]`}>Size</div></th>
        </tr>
      </thead>
      <tbody>
        {files.map((f, i) => {
          const cell = f.selected ? "bg-[#d9d9d9] p-0" : "p-0";
          return (
            <tr key={i} className="h-[27px]">
              <td className={cell}>
                <span className="flex items-center gap-[5px] pl-[5px] text-black">
                  {f.html ? <Edge className="-mt-[2px] h-[20px] w-[20px] shrink-0" /> : <Drive className="-mt-[2px] h-[20px] w-[20px] shrink-0" />}
                  {f.name}
                </span>
              </td>
              <td className={`${cell} pl-[7px]!`}>8/01/2024 {f.time}</td>
              <td className={`${cell} pl-[7px]!`}>{f.html ? "Microsoft Edge HT..." : "Hard Disk Image F..."}</td>
              <td className={`${cell} pr-[5px]! text-right`}>{f.size}</td>
              <td className="p-0" />
            </tr>
          );
        })}
      </tbody>
    </table>
  );
}

/* ---------- dialog ---------- */

function MountDialog() {
  return (
    <div
      role="alertdialog"
      aria-labelledby="dlg-title"
      aria-describedby="dlg-text"
      className="absolute top-[465px] left-[27px] w-[697px] border border-[#707070] bg-white shadow-[0_4px_16px_rgba(0,0,0,0.35)]"
    >
      <div className="flex h-[37px] items-center justify-between pr-[15px] pl-[10px]">
        <h2 id="dlg-title" className="text-[14px] text-black">Couldn’t Mount File</h2>
        <button type="button" aria-label="Close" className="mt-px text-black"><Close className="h-[12px] w-[12px]" /></button>
      </div>
      <div className="flex h-[94px] items-start pt-[14px] pl-[13px]">
        <svg viewBox="0 0 38 38" className="h-[38px] w-[38px] shrink-0">
          <circle cx="19" cy="19" r="18.500" fill="#f03a17" stroke="#b53a22" />
          <path stroke="#fff" strokeWidth="3" strokeLinecap="round" d="M10.500 10.500l17 17M27.500 10.500l-17 17" />
        </svg>
        <p id="dlg-text" className="mt-[6px] ml-[14px] text-[14px] leading-[19px] whitespace-nowrap text-[#1a1a1a]">
          The disk image isn't initialized, contains partitions that aren't recognizable, or contains
          <br />
          volumes that haven't been assigned drive letters. Please use the Disk Management snap-in to
          <br />
          make sure that the disk, partitions, and volumes are in a usable state.
        </p>
      </div>
      <div className="flex h-[52px] items-center justify-end border-t border-[#dfdfdf] bg-[#f0f0f0] pr-[14px]">
        <button type="button" className="h-[27px] w-[83px] border-2 border-[#0078d7] bg-[#e1e1e1] text-[14px] leading-none text-[#1a1a1a]">OK</button>
      </div>
    </div>
  );
}

/* ---------- status bar and taskbar ---------- */

function StatusBar() {
  return (
    <footer className="flex h-[30px] items-center pl-[17px] text-[14px] text-[#1e395b]">
      <span className="w-[69px]">14 items</span>
      <span className="flex h-[14px] items-center border-x border-[#ececec] px-[11px]">
        <span>1 item selected</span>
        <span className="ml-[10px]">148 MB</span>
      </span>
      <div className="ml-auto flex items-center gap-[4px] pr-[9px]">
        <button type="button" aria-label="Details view" className="flex h-[29px] w-[28px] items-center justify-center border border-[#26a0da] bg-[#cbe8f6]">
          <svg viewBox="0 0 18 16" className="h-[16px] w-[18px]">
            <path fill="#fff" stroke="#8f8f8f" d="M.5.5h5v15h-5zM.5 5.500h5M.5 10.500h5" />
            <path fill="#2f6fb0" d="M2 2h2v2H2z" />
            <path fill="#b5853b" d="M2 7h2v2H2z" />
            <path fill="#b43b2c" d="M2 12h2v2H2z" />
            <path stroke="#7b8a93" d="M7 2.500h5M13 2.500h5M7 7.500h5M13 7.500h5M7 12.500h5M13 12.500h5" />
          </svg>
        </button>
        <button type="button" aria-label="Large icons view"><Pictures className="h-[20px] w-[20px]" /></button>
      </div>
    </footer>
  );
}

function Taskbar() {
  return (
    <div className="flex h-[50px] items-center bg-[#eeeeee] text-[14px] text-black">
      <button type="button" aria-label="Start" className="flex h-full w-[60px] items-center justify-center">
        <svg viewBox="0 0 20 20" className="h-[20px] w-[20px]">
          <path d="M0 2.800L8.200 1.700v7.800H0zM9.200 1.500L20 0v9.500H9.200zM0 10.500h8.200v7.800L0 17.200zM9.200 10.500H20V20L9.200 18.500z" />
        </svg>
      </button>
      <div className="flex h-full w-[360px] items-center gap-[15px] border border-[#cccccc] bg-white pl-[14px]">
        <svg viewBox="0 0 20 20" className="h-[20px] w-[20px] shrink-0">
          <circle cx="12.500" cy="7.500" r="6.500" fill="none" stroke="#111" strokeWidth="1.400" />
          <path stroke="#111" strokeWidth="1.400" d="M8 12L.5 19.500" />
        </svg>
        <input type="text" aria-label="Search" placeholder="Type here to search" className="min-w-0 flex-1 bg-transparent text-[18px] outline-none placeholder:text-[#333]" />
      </div>
      <button type="button" aria-label="Microsoft Edge" className="flex h-full w-[66px] items-center justify-center">
        <Edge className="h-[30px] w-[30px]" />
      </button>
      <button type="button" aria-label="File Explorer" className="flex h-full w-[61px] items-center justify-center border-b-3 border-[#857345] bg-[#f8f9f9] pt-[2px] pr-[2px]">
        <svg viewBox="0 0 28 24" className="h-[24px] w-[28px]">
          <path fill="#e3a10b" d="M0 1a1 1 0 0 1 1-1h10l2 2v3H0z" />
          <path fill="#ffd867" d="M0 4h12l2-2h13a1 1 0 0 1 1 1v20H0z" />
          <path fill="#f6c64a" d="M5 12h18v3H5z" />
          <path fill="#3d8fdd" d="M6 14h17v10h-5v-5h-7v5H6z" />
        </svg>
      </button>
      <div className="ml-auto flex h-full items-center">
        <button type="button" aria-label="Show hidden icons">
          <svg viewBox="0 0 16 9" className="h-[9px] w-[16px]"><path fill="none" stroke="#111" strokeWidth="1.300" d="M.5 8.500L8 1l7.500 7.500" /></svg>
        </button>
        <svg viewBox="0 0 20 18" className="ml-[12px] h-[18px] w-[20px]">
          <path fill="#1746d0" d="M4.500 0c-.5 2.500.5 4 2.500 5L10 8l3-3c2-1 3-2.500 2.500-5C18.500 2 20 5 20 8.500c0 4-2 7.500-5.500 9.500 1-2.500 1-5 .2-7.500L10 14.500l-4.700-4c-.8 2.500-.8 5 .2 7.500C2 16 0 12.500 0 8.500 0 5 1.500 2 4.500 0z" />
        </svg>
        <svg viewBox="0 0 20 20" className="ml-[10px] h-[20px] w-[20px]">
          <rect width="16" height="16" rx="2" fill="#fde02b" />
          <circle cx="8.500" cy="7.500" r="4.500" fill="none" stroke="#333" strokeWidth="1.600" />
          <path fill="none" stroke="#333" strokeWidth="1.500" d="M6 7l2 2 4-4" />
          <circle cx="14.500" cy="14.500" r="5.500" fill="#0c7a43" />
          <path fill="none" stroke="#fff" strokeWidth="1.500" d="M11.500 14.500l2.200 2.200 4-4" />
        </svg>
        <svg viewBox="0 0 20 17" className="ml-[10px] h-[17px] w-[20px]">
          <path fill="none" stroke="#111" strokeWidth="1.200" d="M5 .6h14.400v11.800H2.600V6M7 15.900h7M10.500 12v4M.6.6h4v3h-4zM2.600 3.500v3" />
        </svg>
        <span className="ml-[13px]">ENG</span>
        <button type="button" className="ml-[16px] w-[76px] text-center leading-[23px]">
          9:51 AM
          <br />
          8/01/2024
        </button>
        <button type="button" aria-label="Notifications, 1 new" className="relative ml-[23px] h-[20px] w-[20px]">
          <svg viewBox="0 0 20 20" className="h-[20px] w-[20px]">
            <path d="M0 0h20v16h-9l-4 4v-4H0z" />
            <path stroke="#fff" strokeWidth="1.200" d="M4 4.500h12M4 8.500h12M4 12.500h8" />
          </svg>
          <span className="absolute top-[9px] left-[9px] flex h-[21px] w-[21px] items-center justify-center rounded-full border border-[#8a8a8a] bg-[#d5d5d5] text-[14px] leading-none">1</span>
        </button>
        <div className="ml-[25px] h-full w-px bg-[#c4c4c4]" />
        <div className="w-[5px]" />
      </div>
    </div>
  );
}

export default function App() {
  return (
    <div className="flex min-h-screen flex-col overflow-hidden bg-white font-['Open_Sans',sans-serif]">
      <Gradients />
      <TopBar />
      <Ribbon />
      <AddressBar />
      <main className="flex flex-1">
        <NavigationPane />
        <div className="relative min-w-0 flex-1">
          <FileList />
          <MountDialog />
        </div>
      </main>
      <StatusBar />
      <Taskbar />
    </div>
  );
}
